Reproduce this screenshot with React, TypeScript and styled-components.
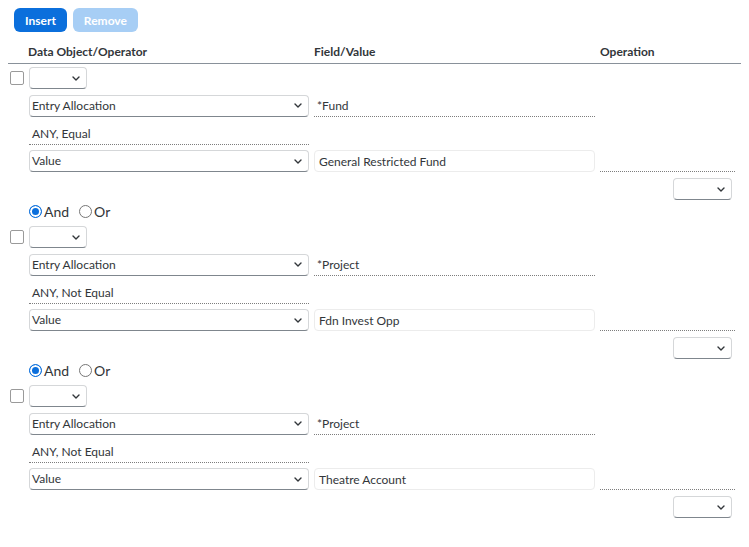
import styled, { createGlobalStyle } from "styled-components";

const GlobalStyle = createGlobalStyle`
  body {
    margin: 8px;
    background: #ffffff;
    font-family: Lato, "Noto Sans", "Liberation Sans", Arial, sans-serif;
    color: #32363a;
  }
`;

type Condition = {
  id: number;
  field: string;
  operator: string;
  value: string;
  link?: "and" | "or";
};

const conditions: Condition[] = [
  { id: 1, field: "*Fund", operator: "ANY, Equal", value: "General Restricted Fund", link: "and" },
  { id: 2, field: "*Project", operator: "ANY, Not Equal", value: "Fdn Invest Opp", link: "and" },
  { id: 3, field: "*Project", operator: "ANY, Not Equal", value: "Theatre Account" },
];

const Toolbar = styled.div`
  display: flex;
  gap: 6px;
  padding-left: 6px;
`;

const Button = styled.button<{ $disabled?: boolean }>`
  height: 24px;
  padding: 0 11px;
  border: none;
  border-radius: 6px;
  font-family: inherit;
  font-size: 12px;
  font-weight: 700;
  color: #ffffff;
  background: ${(p) => (p.$disabled ? "#a7cef5" : "#0b6fdc")};
  cursor: ${(p) => (p.$disabled ? "default" : "pointer")};
`;

const Grid = styled.div`
  display: grid;
  grid-template-columns: 16px 280px 281px 135px;
  column-gap: 5px;
`;

const Header = styled(Grid)`
  height: 32px;
  align-items: end;
  padding-bottom: 4px;
  box-sizing: border-box;
  border-bottom: 1px solid #89919a;
  font-size: 12px;
  font-weight: 700;
  line-height: 14px;
  color: #32363a;
`;

const HeadCell = styled.div<{ $shift?: number }>`
  margin-left: ${(p) => p.$shift ?? 0}px;
`;

const Block = styled(Grid)`
  margin-top: 3px;
  grid-auto-rows: 22px;
  row-gap: 5.75px;
  font-size: 12px;
`;

const Check = styled.span`
  align-self: center;
  width: 14px;
  height: 14px;
  margin-left: 2px;
  border: 1px solid #9a9a9a;
  border-radius: 2px;
  box-sizing: border-box;
  background: #fff;
`;

const SelectBox = styled.div<{ $width?: number; $end?: boolean }>`
  display: flex;
  align-items: center;
  justify-content: space-between;
  width: ${(p) => (p.$width ? `${p.$width}px` : "auto")};
  justify-self: ${(p) => (p.$end ? "end" : "stretch")};
  margin-right: ${(p) => (p.$end ? "3px" : "0")};
  height: 22px;
  padding: 0 6px 0 2px;
  box-sizing: border-box;
  background: #fff;
  border: 1px solid #d5d7d9;
  border-bottom-color: #7f868d;
  border-radius: 4px;
  line-height: 20px;
  white-space: nowrap;
`;

const DottedText = styled.div`
  display: flex;
  align-items: center;
  padding-left: 3px;
  border-bottom: 1px dotted #7d7d7d;
`;

const ValueInput = styled.div`
  display: flex;
  align-items: center;
  padding-left: 4px;
  border: 1px solid #ececec;
  border-radius: 4px;
`;

const DottedRule = styled.div`
  border-bottom: 1px dotted #7d7d7d;
`;

const LinkRow = styled.div`
  height: 23px;
  display: flex;
  align-items: center;
  gap: 10px;
  padding-left: 21px;
  font-size: 14px;
`;

const RadioLabel = styled.label`
  display: flex;
  align-items: center;
  gap: 2px;
`;

const Radio = styled.span<{ $checked?: boolean }>`
  width: 13px;
  height: 13px;
  box-sizing: border-box;
  border-radius: 50%;
  border: 1px solid ${(p) => (p.$checked ? "#0b6fdc" : "#767676")};
  background: ${(p) => (p.$checked ? "#0b6fdc" : "#fff")};
  box-shadow: ${(p) => (p.$checked ? "inset 0 0 0 2px #fff" : "none")};
`;

const Chevron = () => (
  <svg width="8" height="5" viewBox="0 0 8 5" fill="none">
    <path d="M1 1l3 3 3-3" stroke="#32363a" strokeWidth="1.4" strokeLinecap="round" strokeLinejoin="round" />
  </svg>
);

const Select = ({ label = "", width, end }: { label?: string; width?: number; end?: boolean }) => (
  <SelectBox $width={width} $end={end}>
    <span>{label}</span>
    <Chevron />
  </SelectBox>
);

const ConditionBlock = ({ c }: { c: Condition }) => (
  <>
    <Block>
      <Check />
      <Select width={58} />
      <span />
      <span />

      <span />
      <Select label="Entry Allocation" />
      <DottedText>{c.field}</DottedText>
      <span />

      <span />
      <DottedText>{c.operator}</DottedText>
      <span />
      <span />

      <span />
      <Select label="Value" />
      <ValueInput>{c.value}</ValueInput>
      <DottedRule />

      <span />
      <span />
      <span />
      <Select width={59} end />
    </Block>
    {c.link && (
      <LinkRow>
        <RadioLabel>
          <Radio $checked={c.link === "and"} />
          And
        </RadioLabel>
        <RadioLabel>
          <Radio $checked={c.link === "or"} />
          Or
        </RadioLabel>
      </LinkRow>
    )}
  </>
);

export default function App() {
  return (
    <>
      <GlobalStyle />
      <Toolbar>
        <Button>Insert</Button>
        <Button $disabled>Remove</Button>
      </Toolbar>
      <Header>
        <span />
        <HeadCell $shift={-1}>Data Object/Operator</HeadCell>
        <HeadCell>Field/Value</HeadCell>
        <HeadCell>Operation</HeadCell>
      </Header>
      {conditions.map((c) => (
        <ConditionBlock key={c.id} c={c} />
      ))}
    </>
  );
}
